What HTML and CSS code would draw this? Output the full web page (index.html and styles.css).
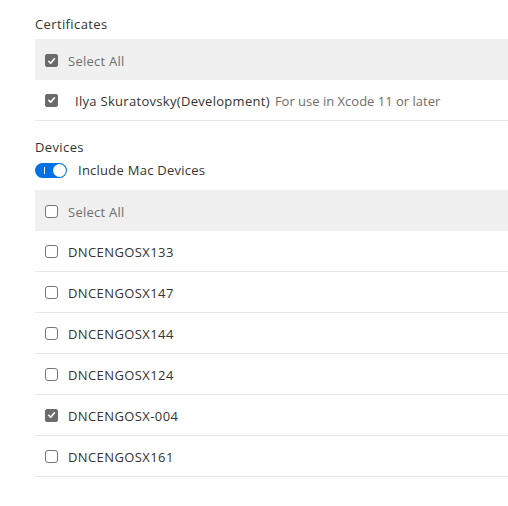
FILE: index.html
```html
<!DOCTYPE html>
<html>
<head>
<meta charset="utf-8">
<link rel="stylesheet" href="styles.css">
</head>
<body>
<div class="page">
  <section class="section">
    <h2 class="heading">Certificates</h2>
    <div class="list">
      <div class="row row-head">
        <span class="cb cb-checked"><svg viewBox="0 0 12 12" width="12" height="12"><path d="M3 6.3 L5.1 8.4 L9.2 3.6" fill="none" stroke="#fff" stroke-width="1.8" stroke-linecap="round" stroke-linejoin="round"/></svg></span>
        <span class="label label-muted">Select All</span>
      </div>
      <div class="row row-item">
        <span class="cb cb-checked"><svg viewBox="0 0 12 12" width="12" height="12"><path d="M3 6.3 L5.1 8.4 L9.2 3.6" fill="none" stroke="#fff" stroke-width="1.8" stroke-linecap="round" stroke-linejoin="round"/></svg></span>
        <span class="label label-cert">Ilya Skuratovsky(Development)</span>
        <span class="label label-muted note">For use in Xcode 11 or later</span>
      </div>
    </div>
  </section>
  <section class="section section-devices">
    <h2 class="heading">Devices</h2>
    <div class="toggle-row">
      <span class="toggle"><span class="toggle-mark"></span><span class="toggle-knob"></span></span>
      <span class="label">Include Mac Devices</span>
    </div>
    <div class="list">
      <div class="row row-head">
        <span class="cb"></span>
        <span class="label label-muted">Select All</span>
      </div>
      <div class="row row-item"><span class="cb"></span><span class="label caps">DNCENGOSX133</span></div>
      <div class="row row-item"><span class="cb"></span><span class="label caps">DNCENGOSX147</span></div>
      <div class="row row-item"><span class="cb"></span><span class="label caps">DNCENGOSX144</span></div>
      <div class="row row-item"><span class="cb"></span><span class="label caps">DNCENGOSX124</span></div>
      <div class="row row-item"><span class="cb cb-checked"><svg viewBox="0 0 12 12" width="12" height="12"><path d="M3 6.3 L5.1 8.4 L9.2 3.6" fill="none" stroke="#fff" stroke-width="1.8" stroke-linecap="round" stroke-linejoin="round"/></svg></span><span class="label caps">DNCENGOSX-004</span></div>
      <div class="row row-item"><span class="cb"></span><span class="label caps">DNCENGOSX161</span></div>
    </div>
  </section>
</div>
</body>
</html>
```
FILE: styles.css
```css
* { box-sizing: border-box; }
html, body { margin: 0; padding: 0; background: #fff; }
body {
  font-family: "Open Sans", "Noto Sans", "Liberation Sans", sans-serif;
  font-size: 13px;
  letter-spacing: 0.25px;
  color: #333;
}
.page {
  padding: 15px 0 0 35px;
}
.heading {
  margin: 0;
  font-size: 13px;
  font-weight: 400;
  line-height: 18px;
  color: #333;
  letter-spacing: 0.38px;
}
.section > .heading { margin-bottom: 6px; }
.section-devices { padding-top: 17px; }
.section-devices > .heading { margin-bottom: 4px; }
.list { display: flex; flex-direction: column; }
.row {
  display: flex;
  align-items: center;
  height: 41px;
  padding-left: 10px;
  padding-top: 2px;
}
.row-head { background: #f0f0f0; }
.row-item { border-bottom: 1px solid #e8e8e8; padding-top: 1px; }
.row-item .cb { margin-top: -1px; }
.cb {
  width: 13px;
  height: 13px;
  border: 1px solid #767676;
  border-radius: 3px;
  background: #fff;
  display: inline-flex;
  align-items: center;
  justify-content: center;
  flex: none;
}
.cb-checked {
  background: #6b6b6b;
  border-color: #6b6b6b;
  border-radius: 2px;
}
.cb svg { display: block; }
.label { margin-left: 10px; line-height: 18px; color: #333; white-space: nowrap; }
.caps { letter-spacing: 0.4px; }
.label-muted { color: #6e6e6e; }
.label-cert { margin-left: 17px; letter-spacing: 0.3px; }
.note { margin-left: 5px; letter-spacing: 0; }
.toggle-row {
  display: flex;
  align-items: center;
  height: 20px;
  margin-bottom: 10px;
}
.toggle-row .label { margin-left: 11px; }
.toggle {
  position: relative;
  width: 32px;
  height: 15px;
  border-radius: 8px;
  background: #0071e3;
  flex: none;
}
.toggle-mark {
  position: absolute;
  left: 9px;
  top: 4px;
  width: 1px;
  height: 7px;
  background: #fff;
}
.toggle-knob {
  position: absolute;
  right: 1px;
  top: 1px;
  width: 13px;
  height: 13px;
  border-radius: 50%;
  background: #fff;
}
```
